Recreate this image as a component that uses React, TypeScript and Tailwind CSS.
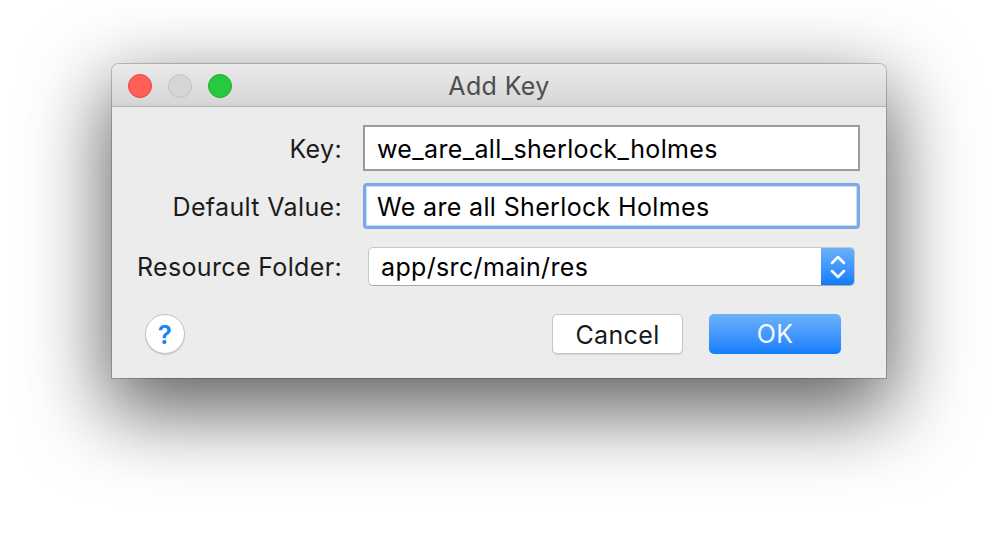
import React from 'react';

const font = { fontFamily: 'Inter, "Noto Sans", sans-serif' };

function TrafficLights() {
  return (
    <div className="absolute left-[16px] top-[10px] flex gap-[16px]">
      <span className="h-[24px] w-[24px] rounded-full border border-[#e0443e] bg-[#ff5f57]" />
      <span className="h-[24px] w-[24px] rounded-full border border-[#c4c4c4] bg-[#d6d6d6]" />
      <span className="h-[24px] w-[24px] rounded-full border border-[#1aab29] bg-[#28c940]" />
    </div>
  );
}

function Chevrons() {
  return (
    <svg width="18" height="28" viewBox="0 0 18 28" fill="none" stroke="white" strokeWidth="2.5" strokeLinecap="round" strokeLinejoin="round">
      <path d="M3 10 L9 4 L15 10" />
      <path d="M3 18 L9 24 L15 18" />
    </svg>
  );
}

export default function App() {
  return (
    <main className="min-h-[538px] w-full bg-white pl-[112px] pt-[64px] tracking-[0.35px]" style={font}>
      <div className="w-[774px] overflow-hidden rounded-t-[7px] bg-[#ececec] shadow-[0_28px_80px_6px_rgba(0,0,0,0.62),0_0_0_1px_rgba(0,0,0,0.2)]">
        {/* title bar */}
        <div className="relative flex h-[43px] items-center justify-center border-b border-[#b1b1b1] bg-gradient-to-b from-[#ebebeb] to-[#d5d5d5]">
          <TrafficLights />
          <span className="mt-[4px] text-[25px] text-[#4d4d4d]">Add Key</span>
        </div>

        {/* form */}
        <div className="pb-[24px] pr-[26px] pt-[18px]">
          <div className="grid grid-cols-[230px_1fr] items-center gap-x-[21px] text-[25px] leading-[36px]">
            <label className="pt-[1px] text-right text-[#1c1c1c]">Key:</label>
            <div className="flex h-[46px] items-center border-2 border-[#9b9b9b] bg-white px-[12px] pt-[1px] text-black">
              we_are_all_sherlock_holmes
            </div>

            <label className="mt-[12px] pt-[1px] text-right text-[#1c1c1c]">Default Value:</label>
            <div className="mt-[12px] flex h-[46px] items-center rounded-[4px] border-[3px] border-[#7ba9e6] bg-white px-[11px] pt-[1px] text-black shadow-[inset_0_0_0_1px_#c9dcf5]">
              We are all Sherlock Holmes
            </div>

            <label className="mt-[18px] pt-[1px] text-right text-[#1c1c1c]">Resource Folder:</label>
            <div className="ml-[5px] mr-[5px] mt-[18px] flex h-[39px] overflow-hidden rounded-[5px] border border-[#c6c6c6] border-b-[#a9a9a9] bg-white">
              <span className="flex flex-1 items-center px-[12px] pt-[1px] text-black">app/src/main/res</span>
              <span className="flex w-[33px] items-center justify-center bg-gradient-to-b from-[#69b1fa] to-[#0d7bfb]">
                <Chevrons />
              </span>
            </div>
          </div>

          <div className="mt-[28px] flex items-center pl-[33px]">
            <button className="flex h-[40px] w-[40px] items-center justify-center rounded-full border border-[#c2c2c2] bg-white text-[26px] font-semibold text-[#1a82fb] shadow-[0_1px_1px_rgba(0,0,0,0.12)]">
              ?
            </button>
            <div className="ml-auto flex gap-[26px] pr-[19px]">
              <button className="h-[40px] w-[131px] rounded-[5px] border border-[#c5c5c5] bg-white pt-[2px] text-[25px] text-[#1a1a1a] shadow-[0_1px_1px_rgba(0,0,0,0.1)]">
                Cancel
              </button>
              <button className="h-[40px] w-[132px] rounded-[5px] bg-gradient-to-b from-[#6cb3fa] to-[#0f7cfb] pt-[2px] text-[25px] text-[#f4f8ff]">
                OK
              </button>
            </div>
          </div>
        </div>
      </div>
    </main>
  );
}
